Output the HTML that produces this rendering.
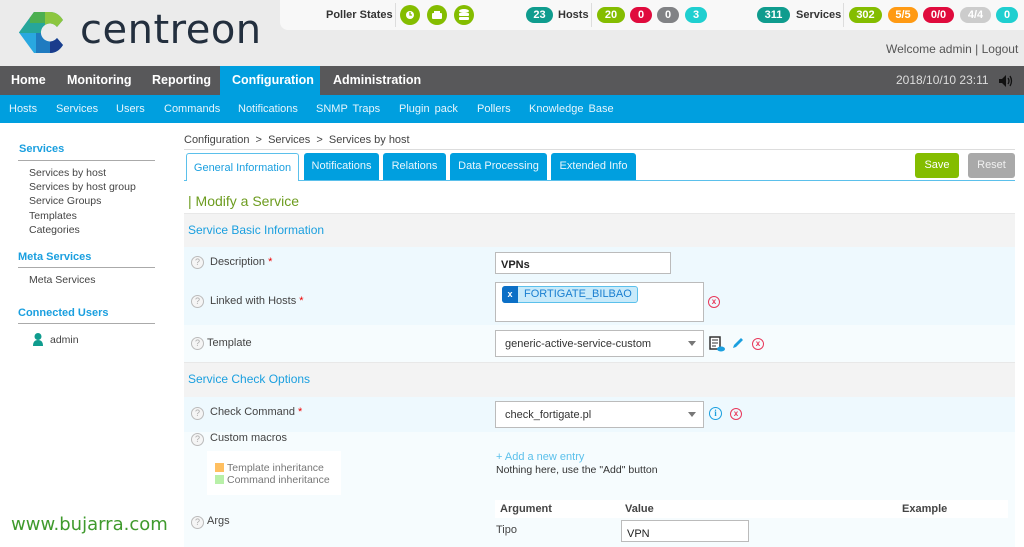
<!DOCTYPE html>
<html><head><meta charset="utf-8">
<style>
*{margin:0;padding:0;box-sizing:border-box}
body{width:1024px;height:547px;overflow:hidden;background:#fff;font-family:"Liberation Sans",sans-serif;position:relative;font-size:11px;color:#333}
.a{position:absolute}
.pill{position:absolute;top:7px;height:16px;border-radius:8px;color:#fff;font-weight:bold;font-size:11px;text-align:center;line-height:16px}
.ic{position:absolute;top:5px;width:20px;height:20px;border-radius:50%;background:#84bd00}
.nav{position:absolute;top:66px;height:29px;line-height:29px;color:#fff;font-weight:bold;font-size:12.5px}
.sub{position:absolute;top:95px;height:28px;line-height:28px;color:#e6f5fc;font-size:11px}
.sb{position:absolute;left:29px;color:#444;font-size:10.5px}
.sh{position:absolute;left:18px;color:#1a9fdf;font-weight:bold;font-size:11px}
.sl{position:absolute;left:18px;width:137px;height:1px;background:#aaa}
.tab{position:absolute;top:153px;height:27px;background:#009fdf;color:#e8f6fd;font-size:11px;line-height:27px;text-align:center;border-radius:3px 3px 0 0}
.q{position:absolute;width:13px;height:13px;border:1px solid #bbb;border-radius:50%;color:#aaa;font-size:9px;text-align:center;line-height:11px;background:#f5f5f5}
.lbl{position:absolute;font-size:11px;color:#444}
.req{color:#e00}
.inp{position:absolute;background:#fff;border:1px solid #bbb}
.x{position:absolute;width:12px;height:12px;border:1.5px solid #e8385a;border-radius:50%;color:#e8385a;font-size:8px;font-weight:bold;text-align:center;line-height:9px}
</style></head><body>
<!-- header -->
<div class="a" style="left:0;top:0;width:1024px;height:66px;background:#ebebeb"></div>
<div class="a" style="left:280px;top:0;width:744px;height:30px;background:#f8f8f8;border-radius:0 0 0 8px"></div>
<svg class="a" style="left:0;top:0" width="70" height="60" viewBox="0 0 70 60">
<defs><clipPath id="cc"><path d="M19 32.5 L34 12 L50 12 Q58 12 63 20 L57 27 A9 9 0 1 0 57 38 L63 45 Q58 53 50 53 L34 53 Z"/></clipPath></defs>
<g clip-path="url(#cc)">
<rect x="0" y="0" width="70" height="60" fill="#29a8e0"/>
<polygon points="0,0 45,0 45,33 0,33" fill="#26a69a"/>
<polygon points="28,0 45,0 45,23 30,23" fill="#4caf50"/>
<rect x="45" y="0" width="25" height="33" fill="#8cc63f"/>
<rect x="36" y="33" width="14" height="27" fill="#1f7bc0"/>
<rect x="50" y="33" width="20" height="27" fill="#1b3c8c"/>
</g></svg>
<div class="a" style="left:80px;top:7px;font-size:40px;color:#232f3e;font-family:'DejaVu Sans',sans-serif;letter-spacing:0.5px">centreon</div>
<div class="a" style="left:326px;top:9px;font-weight:bold;font-size:11px;color:#333">Poller States</div>
<div class="a" style="left:395px;top:3px;width:1px;height:24px;background:#ddd"></div>
<div class="ic" style="left:400px"></div><div class="ic" style="left:427px"></div><div class="ic" style="left:454px"></div>
<svg class="a" style="left:405px;top:10px" width="10" height="10"><circle cx="5" cy="5" r="4" fill="#fff"/><path d="M5 2V5H7" stroke="#84bd00" stroke-width="1.3" fill="none"/></svg>
<svg class="a" style="left:432px;top:11px" width="10" height="8"><rect x="0" y="2" width="10" height="6" rx="1" fill="#fff"/><rect x="2" y="0" width="6" height="3" fill="#fff"/></svg>
<svg class="a" style="left:459px;top:9px" width="10" height="12"><ellipse cx="5" cy="2" rx="5" ry="2" fill="#fff"/><rect x="0" y="4" width="10" height="3" rx="1" fill="#fff"/><rect x="0" y="8" width="10" height="3" rx="1" fill="#fff"/></svg>
<div class="pill" style="left:526px;width:27px;background:#0f9c8e">23</div>
<div class="a" style="left:558px;top:9px;font-weight:bold;color:#333">Hosts</div>
<div class="a" style="left:591px;top:3px;width:1px;height:24px;background:#ddd"></div>
<div class="pill" style="left:597px;width:28px;background:#84bd00">20</div>
<div class="pill" style="left:630px;width:22px;background:#e00b3d">0</div>
<div class="pill" style="left:657px;width:22px;background:#818285">0</div>
<div class="pill" style="left:685px;width:22px;background:#1fcfd0">3</div>
<div class="pill" style="left:757px;width:33px;background:#0f9c8e">311</div>
<div class="a" style="left:796px;top:9px;font-weight:bold;color:#333">Services</div>
<div class="a" style="left:843px;top:3px;width:1px;height:24px;background:#ddd"></div>
<div class="pill" style="left:849px;width:33px;background:#84bd00">302</div>
<div class="pill" style="left:888px;width:30px;background:#ff9a13">5/5</div>
<div class="pill" style="left:923px;width:31px;background:#e00b3d">0/0</div>
<div class="pill" style="left:960px;width:31px;background:#ccc">4/4</div>
<div class="pill" style="left:996px;width:22px;background:#1fcfd0">0</div>
<div class="a" style="left:886px;top:42px;font-size:12px;color:#555">Welcome admin | Logout</div>
<!-- nav -->
<div class="a" style="left:0;top:66px;width:1024px;height:29px;background:#58585a"></div>
<div class="a" style="left:220px;top:66px;width:100px;height:29px;background:#009fdf"></div>
<div class="nav" style="left:11px">Home</div>
<div class="nav" style="left:67px">Monitoring</div>
<div class="nav" style="left:152px">Reporting</div>
<div class="nav" style="left:232px">Configuration</div>
<div class="nav" style="left:333px">Administration</div>
<div class="nav" style="left:896px;font-weight:normal;color:#ddd;font-size:12px">2018/10/10 23:11</div>
<svg class="a" style="left:999px;top:75px" width="14" height="12"><path d="M0 4H3L7 0V12L3 8H0Z" fill="#111"/><path d="M9 3Q11 6 9 9M11 1Q14 6 11 11" stroke="#111" stroke-width="1.3" fill="none"/></svg>
<div class="a" style="left:0;top:95px;width:1024px;height:28px;background:#009fdf"></div>
<div class="sub" style="left:9px">Hosts</div>
<div class="sub" style="left:56px">Services</div>
<div class="sub" style="left:116px">Users</div>
<div class="sub" style="left:164px">Commands</div>
<div class="sub" style="left:238px">Notifications</div>
<div class="sub" style="left:316px;word-spacing:2px">SNMP Traps</div>
<div class="sub" style="left:399px;word-spacing:2px">Plugin pack</div>
<div class="sub" style="left:477px">Pollers</div>
<div class="sub" style="left:529px;word-spacing:2px">Knowledge Base</div>
<!-- sidebar -->
<div class="sh" style="left:19px;top:143px">Services</div>
<div class="sl" style="top:160px"></div>
<div class="sb" style="top:167px">Services by host</div>
<div class="sb" style="top:181px">Services by host group</div>
<div class="sb" style="top:195px">Service Groups</div>
<div class="sb" style="top:210px">Templates</div>
<div class="sb" style="top:224px">Categories</div>
<div class="sh" style="top:251px">Meta Services</div>
<div class="sl" style="top:267px"></div>
<div class="sb" style="top:274px">Meta Services</div>
<div class="sh" style="top:307px">Connected Users</div>
<div class="sl" style="top:323px"></div>
<svg class="a" style="left:33px;top:333px" width="10" height="13"><circle cx="5" cy="3.5" r="3.5" fill="#0f9c8e"/><path d="M0 13Q0 7 5 7Q10 7 10 13Z" fill="#0f9c8e"/></svg>
<div class="sb" style="left:50px;top:334px">admin</div>
<div class="a" style="left:11px;top:514px;font-family:'DejaVu Sans',sans-serif;font-size:18px;color:#3f9a2d">www.bujarra.com</div>
<!-- content -->
<div class="a" style="left:184px;top:134px;font-size:11px;color:#444">Configuration &nbsp;&gt;&nbsp; Services &nbsp;&gt;&nbsp; Services by host</div>
<div class="a" style="left:184px;top:149px;width:831px;height:1px;background:#ddd"></div>
<div class="a" style="left:184px;top:180px;width:831px;height:1px;background:#5bc0eb"></div>
<div class="tab" style="left:186px;width:113px;background:#fff;color:#1a9fdf;border:1px solid #5bc0eb;border-bottom:none;height:28px;line-height:28px">General Information</div>
<div class="tab" style="left:304px;width:75px">Notifications</div>
<div class="tab" style="left:383px;width:63px">Relations</div>
<div class="tab" style="left:450px;width:97px">Data Processing</div>
<div class="tab" style="left:551px;width:85px">Extended Info</div>
<div class="a" style="left:915px;top:153px;width:44px;height:25px;background:#84bd00;border-radius:3px;color:#fff;text-align:center;line-height:25px;font-size:11px">Save</div>
<div class="a" style="left:968px;top:153px;width:47px;height:25px;background:#a9a9a9;border-radius:3px;color:#f0f0f0;text-align:center;line-height:25px;font-size:11px">Reset</div>
<div class="a" style="left:188px;top:193px;font-size:14px;color:#6d9c1f">| Modify a Service</div>
<div class="a" style="left:184px;top:213px;width:831px;height:34px;background:#f3f3f3;border-top:1px solid #e8e8e8"></div>
<div class="a" style="left:188px;top:223px;font-size:12px;color:#1a9fdf">Service Basic Information</div>
<div class="a" style="left:184px;top:247px;width:831px;height:78px;background:#eef9fe"></div>
<div class="a" style="left:184px;top:325px;width:831px;height:37px;background:#f6fcfe"></div>
<div class="a" style="left:184px;top:362px;width:831px;height:35px;background:#f3f3f3;border-top:1px solid #e8e8e8"></div>
<div class="a" style="left:188px;top:372px;font-size:12px;color:#1a9fdf">Service Check Options</div>
<div class="a" style="left:184px;top:397px;width:831px;height:35px;background:#eef9fe"></div>
<div class="a" style="left:184px;top:432px;width:831px;height:115px;background:#f6fcfe"></div>

<div class="q" style="left:191px;top:256px">?</div><div class="lbl" style="left:210px;top:256px">Description <span class="req">*</span></div>
<div class="inp" style="left:495px;top:252px;width:176px;height:22px"></div>
<div class="a" style="left:501px;top:259px;font-size:11px;font-weight:bold;color:#222">VPNs</div>
<div class="q" style="left:191px;top:295px">?</div><div class="lbl" style="left:210px;top:295px">Linked with Hosts <span class="req">*</span></div>
<div class="inp" style="left:495px;top:282px;width:209px;height:40px"></div>
<div class="a" style="left:502px;top:286px;width:136px;height:17px;background:#c8eafa;border:1px solid #5bc0eb;border-radius:3px"></div>
<div class="a" style="left:502px;top:286px;width:16px;height:17px;background:#0b6fc6;border-radius:3px 0 0 3px;color:#fff;font-size:9px;font-weight:bold;text-align:center;line-height:17px">x</div>
<div class="a" style="left:524px;top:288px;font-size:11px;color:#1a7fd0">FORTIGATE_BILBAO</div>
<div class="x" style="left:708px;top:296px">x</div>
<div class="q" style="left:191px;top:337px">?</div><div class="lbl" style="left:207px;top:337px">Template</div>
<div class="inp" style="left:495px;top:330px;width:209px;height:27px"></div>
<div class="a" style="left:505px;top:338px;font-size:11px;color:#333">generic-active-service-custom</div>
<div class="a" style="left:688px;top:341px;border:4px solid transparent;border-top:5px solid #777"></div>
<svg class="a" style="left:709px;top:336px" width="16" height="16"><rect x="1" y="1" width="10" height="12" fill="#fff" stroke="#333" stroke-width="1.5"/><path d="M3 4H9M3 7H9M3 10H7" stroke="#333"/><ellipse cx="12" cy="13" rx="4" ry="2.5" fill="#1a9fdf"/></svg>
<svg class="a" style="left:731px;top:336px" width="14" height="14"><path d="M2 12L3 9L10 2L12 4L5 11Z" fill="#1a9fdf"/></svg>
<div class="x" style="left:752px;top:338px">x</div>

<div class="q" style="left:191px;top:407px">?</div><div class="lbl" style="left:210px;top:406px">Check Command <span class="req">*</span></div>
<div class="inp" style="left:495px;top:401px;width:209px;height:27px"></div>
<div class="a" style="left:505px;top:409px;font-size:11px;color:#333">check_fortigate.pl</div>
<div class="a" style="left:688px;top:412px;border:4px solid transparent;border-top:5px solid #777"></div>
<div class="a" style="left:709px;top:407px;width:13px;height:13px;border:1.5px solid #1a9fdf;border-radius:50%;color:#1a9fdf;font-size:9px;font-weight:bold;text-align:center;line-height:10px;font-family:'Liberation Serif',serif">i</div>
<div class="x" style="left:730px;top:408px">x</div>
<div class="q" style="left:191px;top:433px">?</div><div class="lbl" style="left:210px;top:432px">Custom macros</div>
<div class="a" style="left:207px;top:451px;width:134px;height:44px;background:#fff"></div>
<div class="a" style="left:215px;top:463px;width:9px;height:9px;background:#ffbf60"></div>
<div class="a" style="left:227px;top:462px;font-size:10.5px;color:#777">Template inheritance</div>
<div class="a" style="left:215px;top:475px;width:9px;height:9px;background:#b8f0a8"></div>
<div class="a" style="left:227px;top:474px;font-size:10.5px;color:#777">Command inheritance</div>
<div class="a" style="left:496px;top:451px;font-size:11px;color:#5bc0eb">+ Add a new entry</div>
<div class="a" style="left:496px;top:464px;font-size:10.5px;color:#333">Nothing here, use the "Add" button</div>
<div class="q" style="left:191px;top:516px">?</div><div class="lbl" style="left:207px;top:515px">Args</div>
<div class="a" style="left:495px;top:500px;width:513px;height:18px;background:#fff"></div>
<div class="a" style="left:500px;top:503px;font-weight:bold;font-size:11px;color:#444">Argument</div>
<div class="a" style="left:625px;top:503px;font-weight:bold;font-size:11px;color:#444">Value</div>
<div class="a" style="left:902px;top:503px;font-weight:bold;font-size:11px;color:#444">Example</div>
<div class="a" style="left:496px;top:524px;font-size:11px;color:#444">Tipo</div>
<div class="inp" style="left:621px;top:520px;width:128px;height:22px"></div>
<div class="a" style="left:627px;top:528px;font-size:11px;color:#222">VPN</div>
</body></html>
